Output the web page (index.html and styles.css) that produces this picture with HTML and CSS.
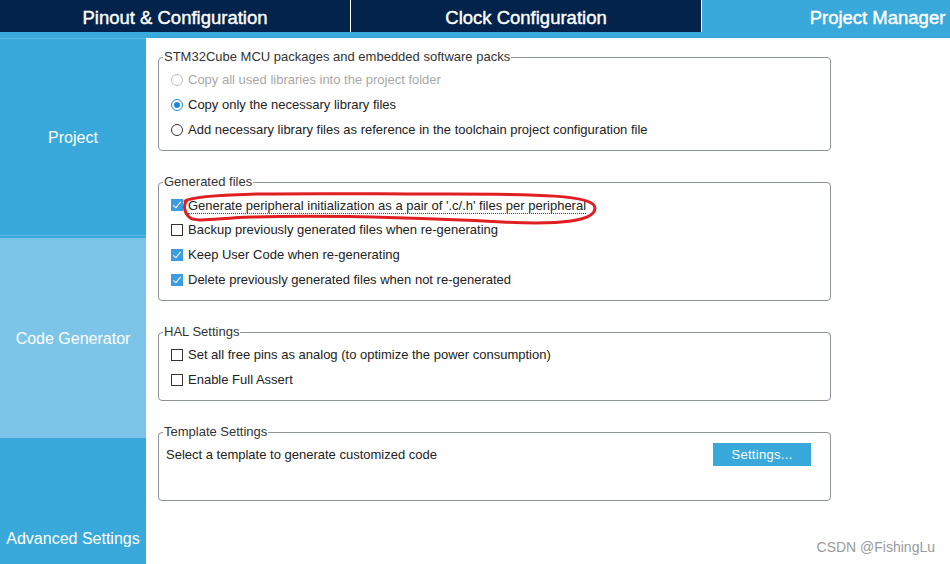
FILE: index.html
```html
<!DOCTYPE html>
<html lang="en">
<head>
    <meta charset="UTF-8">
    <title>Project Manager</title>
    <link rel="stylesheet" href="styles.css">
</head>
<body>
    <div class="tabs">
        <div class="tab">Pinout &amp; Configuration</div>
        <div class="tab">Clock Configuration</div>
        <div class="tab active">Project Manager</div>
    </div>
    <div class="strip"></div>
    <div class="main">
        <ul class="side">
            <li class="first">Project</li>
            <li class="active">Code Generator</li>
            <li>Advanced Settings</li>
        </ul>
        <div class="content">
            <fieldset class="group">
                <legend>STM32Cube MCU packages and embedded software packs</legend>
                <div class="row disabled"><span class="radio"></span>Copy all used libraries into the project folder</div>
                <div class="row"><span class="radio on"></span>Copy only the necessary library files</div>
                <div class="row"><span class="radio"></span>Add necessary library files as reference in the toolchain project configuration file</div>
            </fieldset>

            <fieldset class="group">
                <legend>Generated files</legend>
                <div class="row focus"><span class="check on"></span><span class="label">Generate peripheral initialization as a pair of '.c/.h' files per peripheral</span></div>
                <div class="row"><span class="check"></span>Backup previously generated files when re-generating</div>
                <div class="row"><span class="check on"></span>Keep User Code when re-generating</div>
                <div class="row"><span class="check on"></span>Delete previously generated files when not re-generated</div>
                <svg class="mark" width="430" height="40" viewBox="180 185 430 40">
                    <path d="M188 197 C205 187, 330 190, 450 190 C540 190, 598 191, 598 204 C598 217, 565 221, 505 218 C425 214, 330 211, 255 213 C220 214, 198 219, 192 213 C187 208, 186 201, 190 196" />
                </svg>
            </fieldset>

            <fieldset class="group">
                <legend>HAL Settings</legend>
                <div class="row"><span class="check"></span>Set all free pins as analog (to optimize the power consumption)</div>
                <div class="row"><span class="check"></span>Enable Full Assert</div>
            </fieldset>

            <fieldset class="group template">
                <legend>Template Settings</legend>
                <div class="row plain">
                    <span>Select a template to generate customized code</span>
                    <button class="btn">Settings...</button>
                </div>
            </fieldset>
        </div>
    </div>
    <div class="watermark">CSDN @FishingLu</div>
</body>
</html>
```

FILE: styles.css
```css
body {
    margin: 0;
    width: 950px;
    height: 564px;
    overflow: hidden;
    position: relative;
    font-family: "Liberation Sans", Arial, sans-serif;
    font-size: 13px;
    color: #222;
    background: #fff;
}

.tabs {
    display: flex;
    height: 32px;
    overflow: hidden;
    background: #03234b;
}

.tab {
    flex: 0 0 351px;
    display: flex;
    align-items: center;
    justify-content: center;
    padding-top: 3px;
    box-sizing: border-box;
    color: #fff;
    font-size: 18.5px;
    -webkit-text-stroke: 0.4px #fff;
    border-right: 1px solid #fff;
}

.tab.active {
    background: #39a9dc;
    border-right: none;
}

.strip {
    height: 6px;
    background: #39a9dc;
}

.main {
    display: flex;
}

.side {
    list-style: none;
    margin: 0;
    padding: 0;
    width: 146px;
    flex: none;
    background: #39a9dc;
}

.side > li {
    height: 198px;
    padding-top: 2px;
    display: flex;
    align-items: center;
    justify-content: center;
    background: #39a9dc;
    color: #fff;
    font-size: 16px;
}

.side > li.first {
    height: 194px;
    border-top: 1px solid #5cb9e4;
    border-bottom: 1px solid #5cb9e4;
    margin-bottom: 2px;
}

.side > li.active {
    background: #7dc5e8;
}

.content {
    padding: 11px 0 0 12px;
}

.group {
    position: relative;
    width: 659px;
    margin: 0 0 23px;
    padding: 2px 8px 8px 4px;
    border: 1px solid #8c9298;
    border-radius: 4px;
}

.group legend {
    padding: 0 1px;
    line-height: 16px;
    color: #333;
}

.row {
    display: flex;
    align-items: center;
    height: 25px;
    padding-left: 8px;
}

.row.disabled {
    color: #a8a8a8;
}

.radio,
.check {
    box-sizing: border-box;
    width: 12px;
    height: 12px;
    margin-right: 5px;
    flex: none;
}

.radio {
    border: 1px solid #333;
    border-radius: 50%;
    position: relative;
}

.row.disabled .radio {
    border-color: #bcbcbc;
}

.radio.on {
    border-color: #1e88d8;
}

.radio.on::after {
    content: '';
    position: absolute;
    left: 2px;
    top: 2px;
    width: 6px;
    height: 6px;
    border-radius: 50%;
    background: #1e88d8;
}

.check {
    border: 1px solid #333;
    position: relative;
}

.check.on {
    border-color: #3c9ce0;
    background: #3c9ce0;
}

.check.on::after {
    content: '';
    position: absolute;
    left: 3px;
    top: 0px;
    width: 3px;
    height: 7px;
    border-right: 1.5px solid #fff;
    border-bottom: 1.5px solid #fff;
    transform: rotate(40deg);
}

.row.focus .label {
    border-bottom: 1px dotted #444;
    line-height: 15px;
    margin-top: 2px;
}

.mark {
    position: absolute;
    left: 18px;
    top: -1px;
    pointer-events: none;
}

.mark path {
    fill: none;
    stroke: #e01f22;
    stroke-width: 3;
    stroke-linecap: round;
}

.template {
    padding-bottom: 33px;
}

.row.plain {
    padding-left: 3px;
    justify-content: space-between;
    padding-right: 11px;
}

.btn {
    width: 98px;
    height: 23px;
    border: none;
    background: #39a9dc;
    color: #fff;
    font-family: "Liberation Sans", Arial, sans-serif;
    font-size: 13px;
    letter-spacing: 0.3px;
    padding: 0;
}

.watermark {
    position: absolute;
    right: 15px;
    bottom: 9px;
    font-size: 14px;
    color: #9a9a9a;
}
```
